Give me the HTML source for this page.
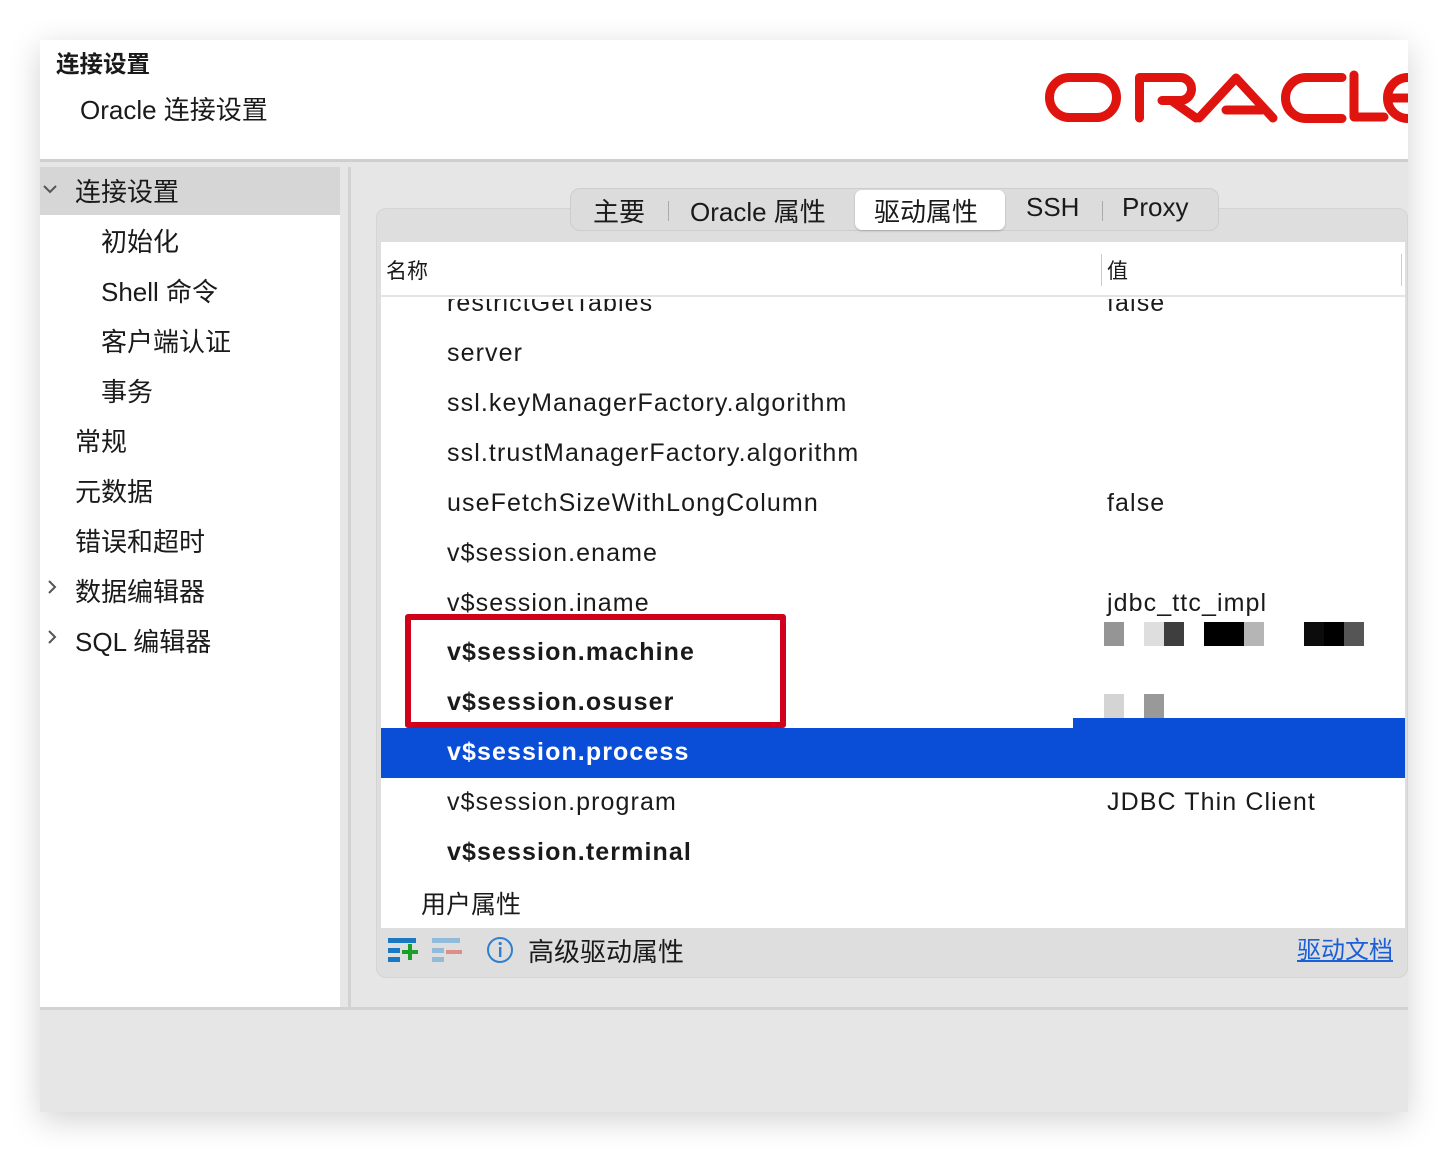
<!DOCTYPE html>
<html><head><meta charset="utf-8"><style>
*{margin:0;padding:0;box-sizing:border-box}
body{width:1448px;height:1152px;background:#fff;position:relative;overflow:hidden;font-family:"Liberation Sans","Noto Sans CJK SC",sans-serif;color:#1a1a1a}
.win{position:absolute;left:40px;top:40px;width:1368px;height:1072px;background:#e6e6e6;box-shadow:0 8px 30px rgba(0,0,0,.18);overflow:hidden}
.hdr{position:absolute;left:0;top:0;width:1368px;height:122px;background:#fff;border-bottom:3px solid #cfcfcf}
.a{position:absolute;white-space:nowrap}
.side{position:absolute;left:0;top:127px;width:300px;height:841px;background:#fff}
.sep{position:absolute;left:308px;top:127px;width:3px;height:841px;background:#d2d2d2}
.bot{position:absolute;left:0;top:967px;width:1368px;height:3px;background:#d2d2d2}
.s{font-size:26px}
.panel{position:absolute;left:336px;top:168px;width:1032px;height:770px;background:#dedede;border-radius:10px;border:1px solid #d4d4d4}
.tbl{position:absolute;left:341px;top:202px;width:1024px;height:686px;background:#fff;overflow:hidden}
.r{position:absolute;left:66px;font-size:25px;letter-spacing:1.1px;white-space:nowrap}
.v{position:absolute;left:726px;font-size:25px;letter-spacing:1.1px;white-space:nowrap}
.tabs{position:absolute;left:530px;top:148px;width:649px;height:43px;background:#dcdcdc;border-radius:10px;border:1px solid #cdcdcd}
.t{position:absolute;top:3px;font-size:26px;white-space:nowrap}
.px{position:absolute;width:20px;height:24px}
</style></head><body>
<div class="win">
 <div class="hdr">
  <div class="a" style="left:16px;top:5px;font-size:23.5px;font-weight:bold">连接设置</div>
  <div class="a" style="left:40px;top:50px;font-size:26px">Oracle 连接设置</div>
  <svg class="a" style="left:0;top:0" width="1368" height="122"><g stroke="#e0140f" stroke-width="9" fill="none" stroke-linejoin="round" stroke-linecap="round" transform="translate(-40,-40)">
   <rect x="1049.5" y="77.5" width="67" height="40" rx="20"/>
   <path d="M1139.5 118V77.5H1180a11.5 11.5 0 0 1 0 23H1162M1172 101L1196 118"/>
   <path d="M1199 118L1236 78L1273 118M1226 110H1262"/>
   <path d="M1342 77.5H1306a20.5 20.5 0 0 0 0 41H1342"/>
   <path d="M1354 75V117H1384"/>
   <path d="M1430 77.5H1408a20.5 20.5 0 0 0 0 41H1430M1392 98H1430"/>
  </g></svg>
 </div>
 <div class="side">
  <div style="position:absolute;left:0;top:0;width:300px;height:48px;background:#d6d6d6"></div>
  <svg class="a" style="left:2px;top:16px" width="16" height="12"><path d="M2 3l6 6 6-6" stroke="#555" stroke-width="2" fill="none"/></svg>
  <div class="a s" style="left:35px;top:5px">连接设置</div>
  <div class="a s" style="left:61px;top:55px">初始化</div>
  <div class="a s" style="left:61px;top:105px">Shell 命令</div>
  <div class="a s" style="left:61px;top:155px">客户端认证</div>
  <div class="a s" style="left:61px;top:205px">事务</div>
  <div class="a s" style="left:35px;top:255px">常规</div>
  <div class="a s" style="left:35px;top:305px">元数据</div>
  <div class="a s" style="left:35px;top:355px">错误和超时</div>
  <svg class="a" style="left:6px;top:412px" width="12" height="16"><path d="M3 2l6 6-6 6" stroke="#555" stroke-width="2" fill="none"/></svg>
  <div class="a s" style="left:35px;top:405px">数据编辑器</div>
  <svg class="a" style="left:6px;top:462px" width="12" height="16"><path d="M3 2l6 6-6 6" stroke="#555" stroke-width="2" fill="none"/></svg>
  <div class="a s" style="left:35px;top:455px">SQL 编辑器</div>
 </div>
 <div class="sep"></div>
 <div class="bot"></div>
 <div class="panel"></div>
 <div class="tabs">
  <div class="t" style="left:22px">主要</div>
  <div style="position:absolute;left:97px;top:12px;width:1px;height:20px;background:#aaa"></div>
  <div class="t" style="left:119px">Oracle 属性</div>
  <div style="position:absolute;left:284px;top:1px;width:150px;height:40px;background:#fff;border-radius:7px;box-shadow:0 1px 2px rgba(0,0,0,.2)"></div>
  <div class="t" style="left:303px">驱动属性</div>
  <div class="t" style="left:455px">SSH</div>
  <div style="position:absolute;left:531px;top:12px;width:1px;height:20px;background:#aaa"></div>
  <div class="t" style="left:551px">Proxy</div>
 </div>
 <div class="tbl">
  <div style="position:absolute;left:0;top:0;width:1024px;height:55px;border-bottom:2px solid #e4e4e4;background:#fff"></div>
  <div class="a" style="left:5px;top:13px;font-size:21px">名称</div>
  <div style="position:absolute;left:720px;top:12px;width:1px;height:32px;background:#ccc"></div>
  <div style="position:absolute;left:1020px;top:12px;width:1px;height:32px;background:#ccc"></div>
  <div class="a" style="left:726px;top:13px;font-size:21px">值</div>
  <div style="position:absolute;left:0;top:57px;width:1024px;height:629px;overflow:hidden">
   <div class="r" style="top:-10px">restrictGetTables</div><div class="v" style="top:-10px">false</div>
   <div class="r" style="top:40px">server</div>
   <div class="r" style="top:90px">ssl.keyManagerFactory.algorithm</div>
   <div class="r" style="top:140px">ssl.trustManagerFactory.algorithm</div>
   <div class="r" style="top:190px">useFetchSizeWithLongColumn</div><div class="v" style="top:190px">false</div>
   <div class="r" style="top:240px">v$session.ename</div>
   <div class="r" style="top:290px">v$session.iname</div><div class="v" style="top:290px">jdbc_ttc_impl</div>
   <div class="px" style="left:723px;top:323px;background:#959595"></div>
   <div class="px" style="left:763px;top:323px;background:#dedede"></div>
   <div class="px" style="left:783px;top:323px;background:#3e3e3e"></div>
   <div class="px" style="left:823px;top:323px;width:40px;background:#000"></div>
   <div class="px" style="left:863px;top:323px;background:#b5b5b5"></div>
   <div class="px" style="left:923px;top:323px;background:#0c0c0c"></div>
   <div class="px" style="left:943px;top:323px;background:#000"></div>
   <div class="px" style="left:963px;top:323px;background:#555"></div>
   <div class="px" style="left:723px;top:395px;background:#d4d4d4"></div>
   <div class="px" style="left:763px;top:395px;background:#999"></div>
   <div class="r" style="top:339px;font-weight:bold">v$session.machine</div>
   <div class="r" style="top:389px;font-weight:bold">v$session.osuser</div>
   <div style="position:absolute;left:0;top:429px;width:1024px;height:50px;background:#0a4ed8"></div>
   <div style="position:absolute;left:692px;top:419px;width:332px;height:12px;background:#0a4ed8"></div>
   <div class="r" style="top:439px;font-weight:bold;color:#fff">v$session.process</div>
   <div class="r" style="top:489px">v$session.program</div><div class="v" style="top:489px">JDBC Thin Client</div>
   <div class="r" style="top:539px;font-weight:bold">v$session.terminal</div>
   <div class="r" style="left:40px;top:586px;letter-spacing:0">用户属性</div>
  </div>
 </div>
 <div style="position:absolute;left:365px;top:574px;width:381px;height:114px;border:6px solid #d0021b;border-radius:3px"></div>
 <svg class="a" style="left:348px;top:896px" width="32" height="28"><rect x="0" y="2" width="28" height="5" fill="#1a78c2"/><rect x="0" y="12" width="12" height="5" fill="#1a78c2"/><rect x="0" y="21" width="12" height="5" fill="#1a78c2"/><rect x="14" y="14" width="16" height="4" fill="#1aa02a"/><rect x="20" y="8" width="4" height="16" fill="#1aa02a"/></svg>
 <svg class="a" style="left:392px;top:896px" width="32" height="28"><rect x="0" y="2" width="28" height="5" fill="#92bbd9"/><rect x="0" y="12" width="12" height="5" fill="#92bbd9"/><rect x="0" y="21" width="12" height="5" fill="#92bbd9"/><rect x="14" y="14" width="16" height="4" fill="#de8e88"/></svg>
 <svg class="a" style="left:446px;top:896px" width="28" height="28"><circle cx="14" cy="14" r="12" stroke="#2f7fd0" stroke-width="2" fill="none"/><rect x="13" y="11" width="2.4" height="10" fill="#2f7fd0"/><circle cx="14.2" cy="7.5" r="1.6" fill="#2f7fd0"/></svg>
 <div class="a" style="left:488px;top:892px;font-size:26px">高级驱动属性</div>
 <div class="a" style="left:1257px;top:890px;font-size:24px;color:#1a5fd6;text-decoration:underline">驱动文档</div>
</div>
</body></html>
